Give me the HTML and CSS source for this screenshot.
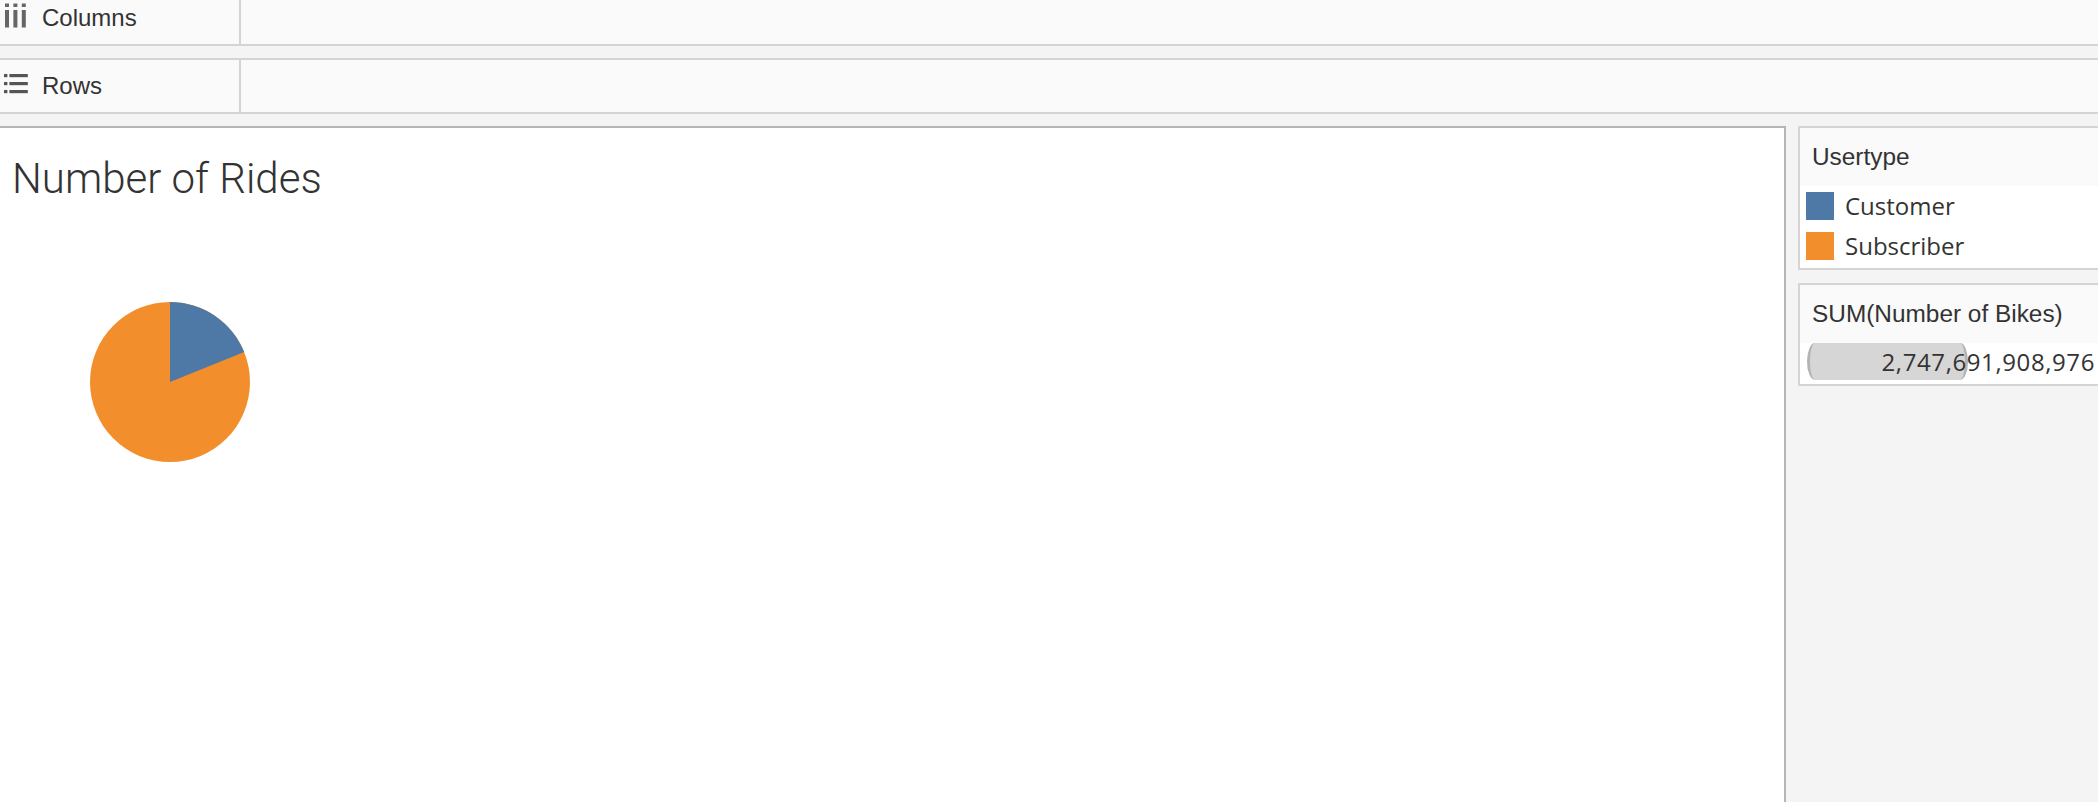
FILE: index.html
```html
<!DOCTYPE html>
<html lang="en">
<head>
  <meta charset="UTF-8">
  <meta name="viewport" content="width=device-width, initial-scale=1">
  <title>Number of Rides</title>
  <link rel="stylesheet" href="styles.css">
</head>
<body>
  <div class="shelf shelf-columns">
    <div class="shelf-label">
      <svg class="shelf-icon" width="42" height="30" viewBox="0 0 42 30">
        <g fill="#666">
          <rect x="5" y="0.5" width="4" height="3.5"/>
          <rect x="5" y="7" width="4" height="17.5"/>
          <rect x="13.4" y="0.5" width="4" height="3.5"/>
          <rect x="13.4" y="7" width="4" height="17.5"/>
          <rect x="21.8" y="0.5" width="4" height="3.5"/>
          <rect x="21.8" y="7" width="4" height="17.5"/>
        </g>
      </svg>
      <span>Columns</span>
    </div>
    <div class="shelf-drop"></div>
  </div>

  <div class="shelf">
    <div class="shelf-label">
      <svg class="shelf-icon" width="42" height="30" viewBox="0 0 42 30">
        <g fill="#555">
          <rect x="4" y="3" width="3.4" height="3.2"/>
          <rect x="9.4" y="3" width="18.4" height="3.2"/>
          <rect x="4" y="11" width="3.4" height="3.2"/>
          <rect x="9.4" y="11" width="18.4" height="3.2"/>
          <rect x="4" y="19" width="3.4" height="3.2"/>
          <rect x="9.4" y="19" width="18.4" height="3.2"/>
        </g>
      </svg>
      <span>Rows</span>
    </div>
    <div class="shelf-drop"></div>
  </div>

  <div class="workspace">
    <div class="viz">
      <h1 class="viz-title">Number of Rides</h1>
      <svg class="pie" width="160" height="160" viewBox="0 0 160 160">
        <circle cx="80" cy="80" r="80" fill="#f28e2b"/>
        <path d="M80 80 L80 0 A80 80 0 0 1 154.2 50 Z" fill="#4e79a7"/>
      </svg>
    </div>

    <div class="side">
      <div class="card">
        <div class="card-head">Usertype</div>
        <div class="legend-list">
          <div class="legend-item"><span class="swatch swatch-customer"></span>Customer</div>
          <div class="legend-item"><span class="swatch swatch-subscriber"></span>Subscriber</div>
        </div>
      </div>

      <div class="card card-size">
        <div class="card-head">SUM(Number of Bikes)</div>
        <div class="size-range">
          <div class="range-bar"></div>
          <div class="range-value">2,747,691,908,976</div>
        </div>
      </div>
    </div>
  </div>
</body>
</html>
```

FILE: styles.css
```css
body {
  margin: 0;
  padding: 0;
  height: 802px;
  overflow: hidden;
  background: #f4f4f4;
  font-family: "Liberation Sans", Arial, sans-serif;
  color: #333;
}
.shelf {
  display: flex;
  height: 52px;
  background: #fafafa;
  border-top: 2px solid #d4d4d4;
  border-bottom: 2px solid #d4d4d4;
}
.shelf-columns {
  margin-top: -10px;
}
.shelf + .shelf {
  margin-top: 12px;
}
.shelf-label {
  width: 239px;
  display: flex;
  align-items: center;
  border-right: 2px solid #d4d4d4;
  font-size: 24px;
}
.shelf-icon {
  display: block;
  flex-shrink: 0;
}
.shelf-drop {
  flex: 1;
}
.workspace {
  display: flex;
  margin-top: 12px;
  height: 676px;
}
.viz {
  width: 1786px;
  flex-shrink: 0;
  box-sizing: border-box;
  background: #fff;
  border-top: 2px solid #b5b5b5;
  border-right: 2px solid #b5b5b5;
}
.viz-title {
  margin: 0;
  padding: 27px 0 0 12px;
  font-family: Roboto, "Liberation Sans", sans-serif;
  font-weight: 300;
  font-size: 42px;
  line-height: 48px;
  color: #333;
}
.pie {
  display: block;
  margin: 99px 0 0 90px;
}
.side {
  flex: 1;
  min-width: 0;
  padding-left: 12px;
}
.card {
  width: 310px;
  background: #fff;
  border: 2px solid #d4d4d4;
}
.card-size {
  margin-top: 13px;
}
.card-head {
  height: 58px;
  display: flex;
  align-items: center;
  padding-left: 12px;
  background: #fafafa;
  font-size: 24.4px;
}
.legend-list {
  display: grid;
  row-gap: 12px;
  padding: 6px 0 8px 6px;
}
.legend-item {
  display: flex;
  align-items: center;
  gap: 11px;
  height: 28px;
  font-family: "Open Sans", "Noto Sans", sans-serif;
  font-size: 24px;
  line-height: 28px;
}
.swatch {
  width: 28px;
  height: 28px;
}
.swatch-customer {
  background: #4e79a7;
}
.swatch-subscriber {
  background: #f28e2b;
}
.size-range {
  display: grid;
  width: 288px;
  margin-left: 7px;
  padding-bottom: 4px;
}
.range-bar,
.range-value {
  grid-area: 1 / 1;
}
.range-bar {
  width: 161px;
  height: 37px;
  box-sizing: border-box;
  background: #d6d6d6;
  border-left: 3px solid #b3b3b3;
  border-right: 3px solid #b3b3b3;
  border-radius: 8px / 50%;
}
.range-value {
  justify-self: end;
  align-self: center;
  font-family: "Open Sans", "Noto Sans", sans-serif;
  font-size: 24px;
  letter-spacing: 0.6px;
  line-height: 28px;
}
```
